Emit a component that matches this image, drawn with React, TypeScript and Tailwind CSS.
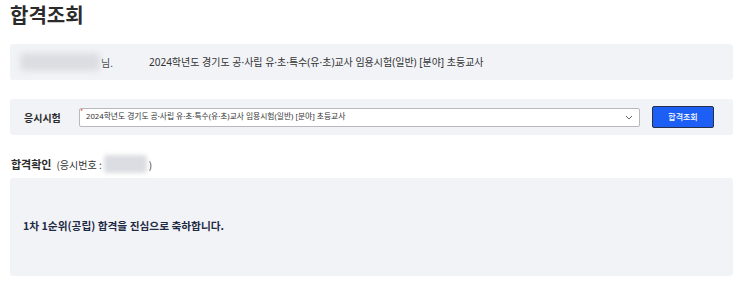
const FONT = { fontFamily: '"Noto Sans CJK KR", "Noto Sans", sans-serif' };
// narrow middle dot like the page's web font
const EXAM_FONT = { fontFamily: '"Noto Sans", "Noto Sans CJK KR", sans-serif' };

const EXAM = "2024학년도 경기도 공·사립 유·초·특수(유·초)교사 임용시험(일반) [분야] 초등교사";

export default function App() {
  return (
    <div className="w-[743px] h-[285px] bg-white text-[#333] px-[10px] pt-[2px]" style={FONT}>
      <h1 className="text-[20px] font-bold leading-[26px] text-[#2b2b2b]">합격조회</h1>

      <div className="mt-[16px] h-[36px] w-[723px] rounded-[3px] bg-[#f2f3f7] flex items-center">
        <div className="ml-[10px] h-[18px] w-[80px] rounded-[4px] bg-[#dcdde2] blur-[3px]" />
        <span className="ml-[1px] text-[10px] text-[#444]">님.</span>
        <span className="ml-[36px] text-[10px] text-[#333]" style={EXAM_FONT}>{EXAM}</span>
      </div>

      <div className="mt-[19px] h-[36px] w-[723px] rounded-[3px] bg-[#f2f3f7] flex items-center">
        <span className="ml-[14px] w-[55px] text-[10px] font-bold text-[#2b2b2b]">응시시험</span>
        <div className="relative h-[19px] w-[561px] border border-[#b9b9bd] bg-white rounded-[2px] flex items-center justify-between pl-[6px] pr-[6px]">
          <span className="absolute left-[0px] top-[-1px] text-[7px] leading-[7px] text-[#e23b3b]">*</span>
          <span className="text-[7.75px] text-[#333] whitespace-nowrap" style={EXAM_FONT}>{EXAM}</span>
          <svg width="8" height="5" viewBox="0 0 8 5" fill="none">
            <path d="M1 1l3 3 3-3" stroke="#666" strokeWidth="1" />
          </svg>
        </div>
        <button className="ml-[12px] h-[22px] w-[62px] rounded-[2px] bg-[#1d5ff5] border border-[#26304a] text-white text-[8px] font-medium">
          합격조회
        </button>
      </div>

      <div className="mt-[19px] flex items-center h-[20px] pl-[1px]">
        <span className="text-[11px] font-bold text-[#2b2b2b]">합격확인</span>
        <span className="ml-[5px] text-[10px] text-[#333]">(응시번호 :</span>
        <div className="ml-[2px] h-[18px] w-[43px] rounded-[3px] bg-[#dcdde2] blur-[2px]" />
        <span className="ml-[2px] text-[10px] text-[#333]">)</span>
      </div>

      <div className="mt-[4px] h-[98px] w-[723px] rounded-[3px] bg-[#f2f3f7] flex items-center">
        <span className="ml-[13px] mt-[-2px] text-[10.7px] font-bold text-[#1f2a44]">1차 1순위(공립) 합격을 진심으로 축하합니다.</span>
      </div>
    </div>
  );
}
